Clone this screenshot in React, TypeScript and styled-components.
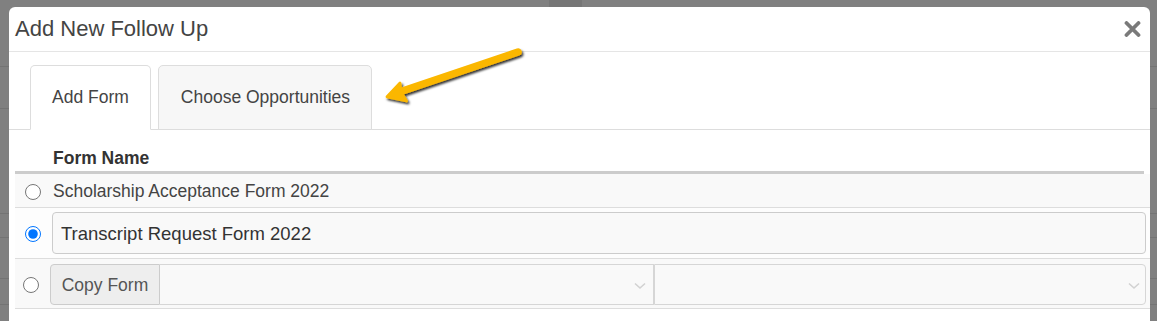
import React from "react";
import styled, { createGlobalStyle } from "styled-components";

const GlobalStyle = createGlobalStyle`
  html, body { margin: 0; padding: 0; }
  body {
    background: #808080;
    font-family: "Liberation Sans", Arial, sans-serif;
    overflow: hidden;
    width: 1157px;
    height: 321px;
  }
  * { box-sizing: border-box; }
`;

const line = (y: number, c = "#747474") => `linear-gradient(${c}, ${c}) 0 ${y}px / 100% 1px no-repeat`;

const Backdrop = styled.div`
  width: 1157px;
  height: 321px;
  padding: 7px 7px 0 9px;
  overflow: hidden;
  background: ${line(66)}, ${line(108)}, ${line(213)}, ${line(237)}, ${line(278)}, ${line(304)},
    linear-gradient(#767676, #767676) 549px 0 / 33px 7px no-repeat, #808080;
`;

const Modal = styled.div`
  position: relative;
  width: 1141px;
  height: 340px;
  background: #fff;
  border-radius: 6px 6px 0 0;
  color: #333;
`;

const Header = styled.div`
  height: 45px;
  display: flex;
  align-items: center;
  justify-content: space-between;
  padding: 0 9px 0 6px;
  border-bottom: 1px solid #e5e5e5;
`;

const Title = styled.h4`
  margin: 0;
  font-size: 22px;
  font-weight: normal;
  color: #444;
  line-height: 1;
`;

const CloseButton = styled.button`
  border: 0;
  background: transparent;
  padding: 0;
  display: flex;
  cursor: pointer;
`;

const Body = styled.div`
  padding-top: 13px;
`;

const TabNav = styled.div`
  display: flex;
  padding-left: 21px;
  border-bottom: 1px solid #ddd;
`;

const Tab = styled.div<{ $active?: boolean }>`
  margin-right: 7px;
  margin-bottom: -1px;
  padding: 19px ${(p) => (p.$active ? "21px" : "21px")} 19px ${(p) => (p.$active ? "21px" : "22px")};
  line-height: 25px;
  font-size: 17.5px;
  color: #444;
  background: ${(p) => (p.$active ? "#fff" : "#f7f7f7")};
  border: 1px solid #ddd;
  border-bottom-color: ${(p) => (p.$active ? "transparent" : "#ddd")};
  border-radius: 5px 5px 0 0;
`;

const TabContent = styled.div`
  padding-left: 6px;
  margin-top: 14px;
`;

const HeadRow = styled.div`
  height: 30px;
  display: flex;
  align-items: center;
  padding: 2px 0 1px 38px;
  margin-right: 6px;
  border-bottom: 3px solid #ccc;
  font-size: 17.5px;
  font-weight: bold;
  color: #333;
`;

const Row = styled.div<{ $striped?: boolean; $pad: string }>`
  display: flex;
  align-items: center;
  padding: ${(p) => p.$pad};
  background: ${(p) => (p.$striped ? "#f9f9f9" : "#fdfdfd")};
  border-bottom: 1px solid #ddd;
`;

const RadioCell = styled.div<{ $w: number; $pl: number; $pt?: number }>`
  width: ${(p) => p.$w}px;
  padding-left: ${(p) => p.$pl}px;
  padding-top: ${(p) => p.$pt ?? 0}px;
  display: flex;
  align-items: center;
  flex-shrink: 0;
`;

const Radio = styled.input.attrs({ type: "radio" })`
  width: 16px;
  height: 16px;
  margin: 0;
  accent-color: #0075ff;
`;

const CellText = styled.span`
  font-size: 17.5px;
  color: #444;
  padding: 2px 0 0 1px;
`;

const TextInput = styled.input`
  flex: 1;
  height: 42px;
  border: 1px solid #ccc;
  border-radius: 4px;
  background: #f9f9f9;
  padding: 2px 8px 0;
  font-family: "Liberation Sans", Arial, sans-serif;
  font-size: 18.5px;
  color: #333;
  outline: none;
`;

const InputGroup = styled.div`
  flex: 1;
  display: flex;
  height: 41px;
`;

const Addon = styled.div`
  width: 110px;
  display: flex;
  align-items: center;
  justify-content: center;
  padding-top: 1px;
  background: #eee;
  border: 1px solid #ccc;
  border-radius: 4px 0 0 4px;
  font-size: 17.5px;
  color: #555;
`;

const FakeSelect = styled.div<{ $last?: boolean }>`
  flex: 1;
  display: flex;
  align-items: center;
  justify-content: flex-end;
  padding: 2px ${(p) => (p.$last ? "5px" : "7px")} 0 0;
  background: #f9f9f9;
  border: 1px solid #d6d6d6;
  border-left: ${(p) => (p.$last ? "1px solid #d6d6d6" : "none")};
  border-radius: ${(p) => (p.$last ? "0 4px 4px 0" : "0")};
`;

const ArrowLayer = styled.svg`
  position: absolute;
  left: 361px;
  top: 28px;
  overflow: visible;
`;

const Chevron = () => (
  <svg width="12" height="8" viewBox="0 0 12 8">
    <path d="M1 1.5 L6 6 L11 1.5" fill="none" stroke="#d2d2d2" strokeWidth="1.6" />
  </svg>
);

export default function App() {
  return (
    <>
      <GlobalStyle />
      <Backdrop>
        <Modal>
          <Header>
            <Title>Add New Follow Up</Title>
            <CloseButton aria-label="Close">
              <svg width="17" height="16" viewBox="0 0 17 16">
                <path d="M2.5 2 L14.5 14 M14.5 2 L2.5 14" stroke="#7a7a7a" strokeWidth="3.8" strokeLinecap="round" />
              </svg>
            </CloseButton>
          </Header>
          <Body>
            <TabNav>
              <Tab $active>Add Form</Tab>
              <Tab>Choose Opportunities</Tab>
            </TabNav>
            <TabContent>
              <HeadRow>Form Name</HeadRow>
              <Row $striped $pad="0" style={{ height: 34 }}>
                <RadioCell $w={37} $pl={10} $pt={2}>
                  <Radio name="form" />
                </RadioCell>
                <CellText>Scholarship Acceptance Form 2022</CellText>
              </Row>
              <Row $pad="4px 4px 4px 0">
                <RadioCell $w={37} $pl={10} $pt={1}>
                  <Radio name="form" defaultChecked />
                </RadioCell>
                <TextInput defaultValue="Transcript Request Form 2022" />
              </Row>
              <Row $striped $pad="5px 4px 3px 0">
                <RadioCell $w={35} $pl={8} $pt={1}>
                  <Radio name="form" />
                </RadioCell>
                <InputGroup>
                  <Addon>Copy Form</Addon>
                  <FakeSelect>
                    <Chevron />
                  </FakeSelect>
                  <FakeSelect $last>
                    <Chevron />
                  </FakeSelect>
                </InputGroup>
              </Row>
            </TabContent>
          </Body>
          <ArrowLayer width="170" height="80" viewBox="370 35 170 80">
            <defs>
              <filter id="sh" x="-20%" y="-40%" width="140%" height="180%">
                <feDropShadow dx="1.5" dy="2" stdDeviation="1.2" floodColor="#000" floodOpacity="0.8" />
              </filter>
            </defs>
            <g filter="url(#sh)" fill="#fbb700" stroke="#fbb700">
              <line x1="518" y1="52" x2="398" y2="92.5" strokeWidth="7.5" strokeLinecap="round" />
              <polygon
                points="387,96.8 400,83 401,92 406.5,101"
                strokeWidth="2.8"
                strokeLinejoin="round"
              />
            </g>
          </ArrowLayer>
        </Modal>
      </Backdrop>
    </>
  );
}
